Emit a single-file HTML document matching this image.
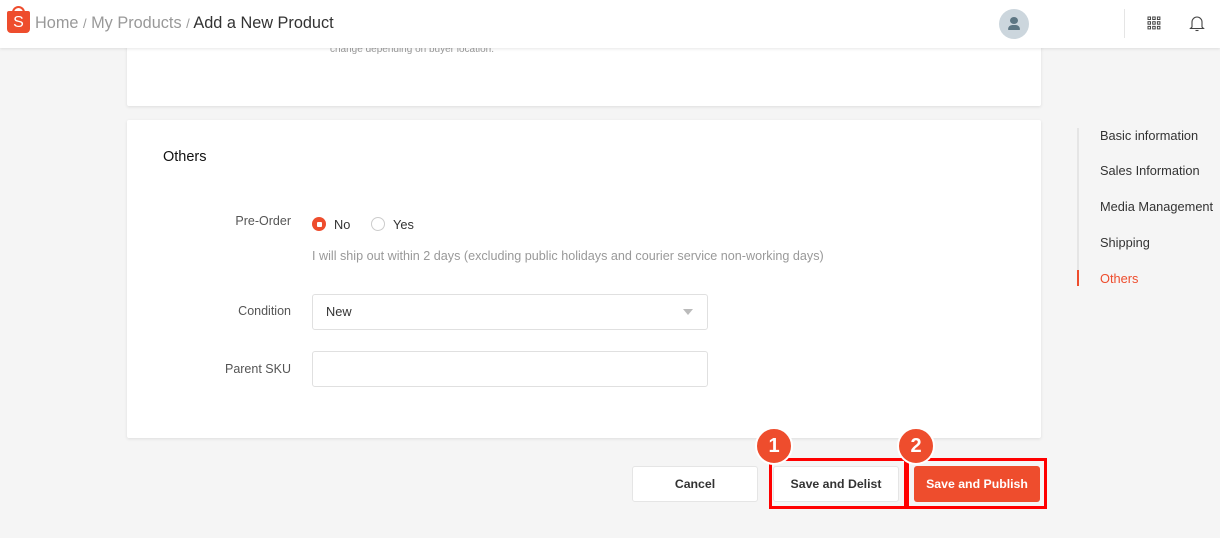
<!DOCTYPE html>
<html><head><style>
*{box-sizing:border-box;margin:0;padding:0}
body{width:1220px;height:538px;background:#f5f5f5;font-family:"Liberation Sans",Arial,sans-serif;position:relative;overflow:hidden;color:#333}
.abs{position:absolute}
.hdr{left:0;top:0;width:1220px;height:48px;background:#fff;box-shadow:0 1px 3px rgba(0,0,0,.1);z-index:2}
.card{background:#fff;box-shadow:0 1px 3px rgba(0,0,0,.1);border-radius:2px}
.lbl{font-size:12.5px;color:#555;text-align:right;width:165px}
.inp{border:1px solid #e0e0e0;border-radius:3px;background:#fff;width:396px;height:36px}
.btn{height:36px;border-radius:3px;font-size:12.3px;font-weight:bold;display:flex;align-items:center;justify-content:center}
.num{width:38px;height:38px;border-radius:50%;background:#ee4d2d;color:#fff;font-weight:bold;font-size:20px;display:flex;align-items:center;justify-content:center;border:2px solid #fff}
.nav{font-size:12.8px;color:#333;left:1100px}
</style></head><body>
<div class="abs hdr">
 <div class="abs" style="left:12px;top:6px;width:13px;height:9px;border:2px solid #ee4d2d;border-bottom:none;border-radius:7px 7px 0 0"></div>
 <div class="abs" style="left:7px;top:11px;width:23px;height:22px;background:#ee4d2d;border-radius:2px 2px 4px 4px;color:#fff;font-size:16px;text-align:center;line-height:23px">S</div>
 <div class="abs" style="left:35px;top:14px;font-size:16.3px;color:#999">Home <span style="font-size:13px">/</span> My Products <span style="font-size:13px">/</span> <span style="color:#333">Add a New Product</span></div>
 <div class="abs" style="left:999px;top:9px;width:30px;height:30px;border-radius:50%;background:#ccd6dd">
  <div class="abs" style="left:11px;top:8px;width:8px;height:7px;border-radius:50%;background:#5d7683"></div>
  <div class="abs" style="left:9px;top:16px;width:12px;height:5px;border-radius:6px 6px 1px 1px;background:#5d7683"></div>
 </div>
 <div class="abs" style="left:1124px;top:9px;width:1px;height:29px;background:#e5e5e5"></div>
 <svg class="abs" style="left:1147px;top:16px" width="14" height="14" viewBox="0 0 14 14" fill="none" stroke="#444" stroke-width="1"><rect x="1" y="1" width="2.5" height="2.5"/><rect x="5.7" y="1" width="2.5" height="2.5"/><rect x="10.4" y="1" width="2.5" height="2.5"/><rect x="1" y="5.7" width="2.5" height="2.5"/><rect x="5.7" y="5.7" width="2.5" height="2.5"/><rect x="10.4" y="5.7" width="2.5" height="2.5"/><rect x="1" y="10.4" width="2.5" height="2.5"/><rect x="5.7" y="10.4" width="2.5" height="2.5"/><rect x="10.4" y="10.4" width="2.5" height="2.5"/></svg>
 <svg class="abs" style="left:1189px;top:15px" width="16" height="17" viewBox="0 0 16 17" fill="none" stroke="#444" stroke-width="1.1"><path d="M3 12V7a5 5 0 0110 0v5l1.5 1.5h-13z"/><path d="M6.5 15.5h3"/></svg>
</div>
<div class="abs card" style="left:127px;top:30px;width:914px;height:76px"></div>
<div class="abs" style="left:330px;top:44px;font-size:10px;color:#999;z-index:1">change depending on buyer location.</div>
<div class="abs card" style="left:127px;top:120px;width:914px;height:318px"></div>
<div class="abs" style="left:163px;top:149px;font-size:14.5px;color:#111">Others</div>
<div class="abs lbl" style="left:126px;top:214px">Pre-Order</div>
<div class="abs" style="left:312px;top:217px;width:14px;height:14px;border-radius:50%;background:#ee4d2d"><div class="abs" style="left:4.5px;top:4.5px;width:5px;height:5px;background:#fff;border-radius:1px"></div></div>
<div class="abs" style="left:334px;top:217px;font-size:12.8px">No</div>
<div class="abs" style="left:371px;top:217px;width:14px;height:14px;border-radius:50%;border:1px solid #ccc"></div>
<div class="abs" style="left:393px;top:217px;font-size:12.8px">Yes</div>
<div class="abs" style="left:312px;top:249px;font-size:12.6px;color:#999">I will ship out within 2 days (excluding public holidays and courier service non-working days)</div>
<div class="abs lbl" style="left:126px;top:304px">Condition</div>
<div class="abs inp" style="left:312px;top:294px"><span class="abs" style="left:13px;top:9px;font-size:12.8px">New</span><span class="abs" style="left:370px;top:14px;border:5px solid transparent;border-top:6px solid #bbb"></span></div>
<div class="abs lbl" style="left:126px;top:362px">Parent SKU</div>
<div class="abs inp" style="left:312px;top:351px"></div>
<div class="abs" style="left:1077px;top:128px;width:2px;height:157px;background:#e5e5e5"></div>
<div class="abs" style="left:1077px;top:270px;width:2px;height:16px;background:#ee4d2d"></div>
<div class="abs nav" style="top:128px">Basic information</div>
<div class="abs nav" style="top:163px">Sales Information</div>
<div class="abs nav" style="top:199px">Media Management</div>
<div class="abs nav" style="top:235px">Shipping</div>
<div class="abs nav" style="top:271px;color:#ee4d2d">Others</div>
<div class="abs btn" style="left:632px;top:466px;width:126px;background:#fff;border:1px solid #e5e5e5;color:#333">Cancel</div>
<div class="abs btn" style="left:773px;top:466px;width:126px;background:#fff;border:1px solid #e5e5e5;color:#333">Save and Delist</div>
<div class="abs btn" style="left:914px;top:466px;width:126px;background:#ee4d2d;color:#fff">Save and Publish</div>
<div class="abs" style="left:769px;top:458px;width:138px;height:51px;border:3px solid #f00"></div>
<div class="abs" style="left:906px;top:458px;width:141px;height:51px;border:3px solid #f00"></div>
<div class="abs num" style="left:755px;top:427px">1</div>
<div class="abs num" style="left:897px;top:427px">2</div>
</body></html>
